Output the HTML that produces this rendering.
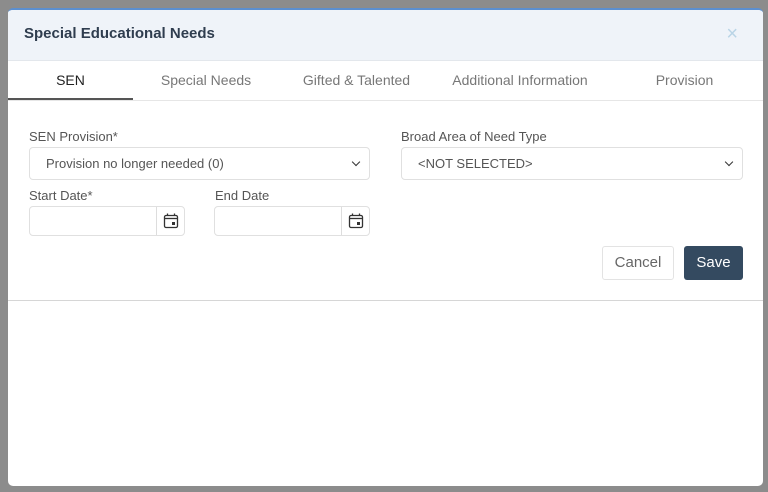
<!DOCTYPE html>
<html><head><style>
*{box-sizing:border-box;margin:0;padding:0}
body{width:768px;height:492px;background:#8c8c8c;font-family:"Liberation Sans",sans-serif;position:relative;overflow:hidden}
.m{position:absolute;left:8px;top:8px;width:755px;height:478px;background:#fff;border-radius:5px;border-top:2px solid #5b8fd0;overflow:hidden}
.hd{height:51px;background:#eff3f9;border-bottom:1px solid #e3e7ec;position:relative}
.hd h1{position:absolute;left:16px;top:15px;font-size:15px;font-weight:bold;color:#2f3d4f}
.x{position:absolute;right:25px;top:13px;font-size:20px;color:#b9d4e6}
.tabs{height:40px;display:flex;border-bottom:1px solid #e6e6e6}
.tab{font-size:14px;color:#777;text-align:center;line-height:38px}
.tab.a{color:#222;border-bottom:2px solid #555}
label{position:absolute;font-size:13px;color:#555}
.f{position:absolute;border:1px solid #e0e0e0;border-radius:4px;background:#fff;font-size:13px;color:#555}
.sel{height:33px;line-height:31px;padding-left:16px}
.sel:after{content:"";position:absolute;right:10px;top:11px;width:5px;height:5px;border-right:1.5px solid #333;border-bottom:1.5px solid #333;transform:rotate(45deg)}
.dt{height:30px}
.cal{position:absolute;right:0;top:0;width:28px;height:28px;border-left:1px solid #ddd}
.btn{position:absolute;height:34px;border-radius:3px;font-size:15px;line-height:34px;text-align:center}
</style></head><body>
<div class="m">
<div class="hd"><h1>Special Educational Needs</h1><span class="x">×</span></div>
<div class="tabs">
<div class="tab a" style="width:125px">SEN</div>
<div class="tab" style="width:146px">Special Needs</div>
<div class="tab" style="width:155px">Gifted &amp; Talented</div>
<div class="tab" style="width:172px">Additional Information</div>
<div class="tab" style="width:157px">Provision</div>
</div>
<label style="left:21px;top:119px">SEN Provision*</label>
<div class="f sel" style="left:21px;top:137px;width:341px">Provision no longer needed (0)</div>
<label style="left:393px;top:119px">Broad Area of Need Type</label>
<div class="f sel" style="left:393px;top:137px;width:342px">&lt;NOT SELECTED&gt;</div>
<label style="left:21px;top:178px">Start Date*</label>
<div class="f dt" style="left:21px;top:196px;width:156px"><div class="cal"><svg width="28" height="28" viewBox="0 0 28 28"><rect x="7.5" y="8.5" width="13" height="12" rx="1.5" fill="none" stroke="#333" stroke-width="1.3"/><line x1="7.5" y1="11.5" x2="20.5" y2="11.5" stroke="#333" stroke-width="1.3"/><line x1="10.5" y1="6.5" x2="10.5" y2="9" stroke="#333" stroke-width="1.3"/><line x1="17.5" y1="6.5" x2="17.5" y2="9" stroke="#333" stroke-width="1.3"/><rect x="15" y="15" width="3" height="3" fill="#333"/></svg></div></div>
<label style="left:207px;top:178px">End Date</label>
<div class="f dt" style="left:206px;top:196px;width:156px"><div class="cal"><svg width="28" height="28" viewBox="0 0 28 28"><rect x="7.5" y="8.5" width="13" height="12" rx="1.5" fill="none" stroke="#333" stroke-width="1.3"/><line x1="7.5" y1="11.5" x2="20.5" y2="11.5" stroke="#333" stroke-width="1.3"/><line x1="10.5" y1="6.5" x2="10.5" y2="9" stroke="#333" stroke-width="1.3"/><line x1="17.5" y1="6.5" x2="17.5" y2="9" stroke="#333" stroke-width="1.3"/><rect x="15" y="15" width="3" height="3" fill="#333"/></svg></div></div>
<div class="btn" style="left:594px;top:236px;width:72px;border:1px solid #e3e3e3;color:#666;line-height:32px">Cancel</div>
<div class="btn" style="left:676px;top:236px;width:59px;background:#344a60;color:#fff">Save</div>
<div style="position:absolute;left:0;right:0;top:290px;border-top:1px solid #d6d6d6"></div>
</div>
</body></html>
